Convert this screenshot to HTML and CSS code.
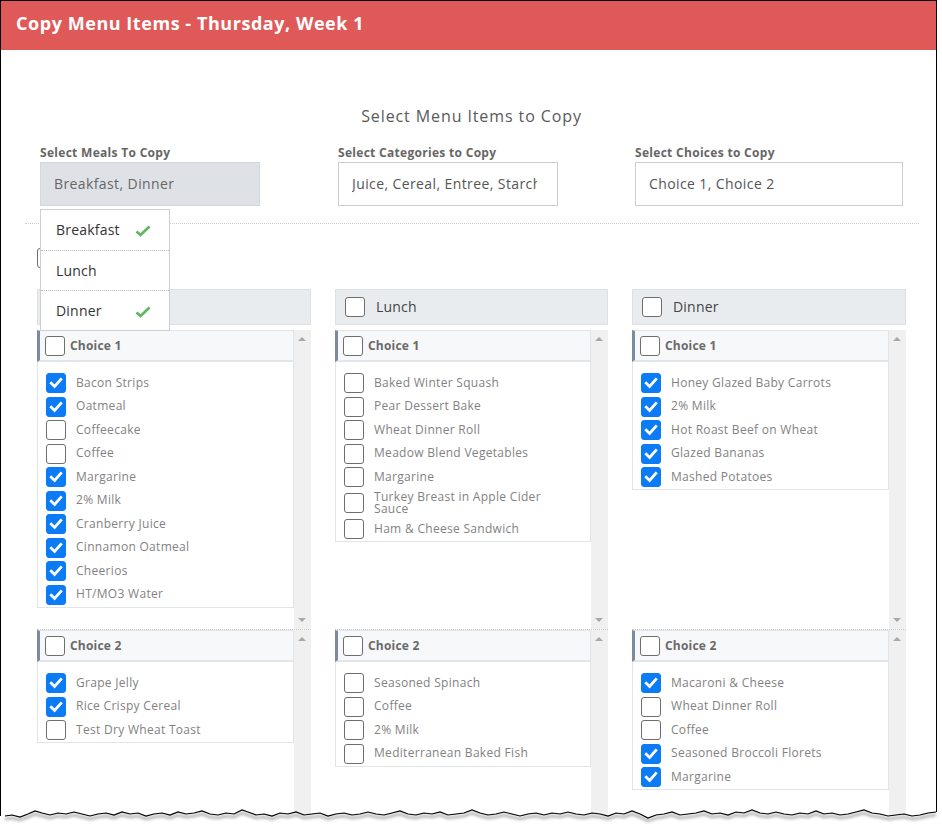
FILE: index.html
```html
<!DOCTYPE html>
<html lang="en">
<head>
<meta charset="utf-8">
<title>Copy Menu Items</title>
<link rel="stylesheet" href="styles.css">
</head>
<body>
<div class="frame">
  <div class="titlebar">Copy Menu Items - Thursday, Week 1</div>
  <div class="content">
    <h2 class="subtitle">Select Menu Items to Copy</h2>
    <div class="filters">
      <div class="filter">
        <label class="flabel">Select Meals To Copy</label>
        <div class="finput disabled"><span class="fval">Breakfast, Dinner</span></div>
        <ul class="dropdown">
          <li class="dd-item">Breakfast<svg class="dd-check" viewBox="0 0 16 12"><path d="M1.5 6.5 L5.5 10 L14.5 1.5" /></svg></li>
          <li class="dd-item">Lunch</li>
          <li class="dd-item">Dinner<svg class="dd-check" viewBox="0 0 16 12"><path d="M1.5 6.5 L5.5 10 L14.5 1.5" /></svg></li>
        </ul>
      </div>
      <div class="filter">
        <label class="flabel">Select Categories to Copy</label>
        <div class="finput"><span class="fval">Juice, Cereal, Entree, Starch</span></div>
      </div>
      <div class="filter">
        <label class="flabel">Select Choices to Copy</label>
        <div class="finput"><span class="fval">Choice 1, Choice 2</span></div>
      </div>
    </div>
    <hr class="sep">
    <div class="select-all"><span class="cb"></span></div>

    <div class="meals">
      <!-- Breakfast -->
      <section class="meal">
        <div class="meal-head"><span class="cb"></span><span>Breakfast</span></div>
        <div class="pane pane-1">
          <div class="pane-body">
            <div class="choice-head"><span class="cb"></span>Choice 1</div>
            <ul class="items">
              <li class="item"><span class="cb on"><svg viewBox="0 0 14 14"><path d="M2.3 7.3 L5.6 10.4 L11.8 3.4"/></svg></span><span class="iname">Bacon Strips</span></li>
              <li class="item"><span class="cb on"><svg viewBox="0 0 14 14"><path d="M2.3 7.3 L5.6 10.4 L11.8 3.4"/></svg></span><span class="iname">Oatmeal</span></li>
              <li class="item"><span class="cb"></span><span class="iname">Coffeecake</span></li>
              <li class="item"><span class="cb"></span><span class="iname">Coffee</span></li>
              <li class="item"><span class="cb on"><svg viewBox="0 0 14 14"><path d="M2.3 7.3 L5.6 10.4 L11.8 3.4"/></svg></span><span class="iname">Margarine</span></li>
              <li class="item"><span class="cb on"><svg viewBox="0 0 14 14"><path d="M2.3 7.3 L5.6 10.4 L11.8 3.4"/></svg></span><span class="iname">2% Milk</span></li>
              <li class="item"><span class="cb on"><svg viewBox="0 0 14 14"><path d="M2.3 7.3 L5.6 10.4 L11.8 3.4"/></svg></span><span class="iname">Cranberry Juice</span></li>
              <li class="item"><span class="cb on"><svg viewBox="0 0 14 14"><path d="M2.3 7.3 L5.6 10.4 L11.8 3.4"/></svg></span><span class="iname">Cinnamon Oatmeal</span></li>
              <li class="item"><span class="cb on"><svg viewBox="0 0 14 14"><path d="M2.3 7.3 L5.6 10.4 L11.8 3.4"/></svg></span><span class="iname">Cheerios</span></li>
              <li class="item"><span class="cb on"><svg viewBox="0 0 14 14"><path d="M2.3 7.3 L5.6 10.4 L11.8 3.4"/></svg></span><span class="iname">HT/MO3 Water</span></li>
            </ul>
          </div>
          <div class="scroll"><span class="arr up"></span><span class="arr down"></span></div>
        </div>
        <div class="pane pane-2">
          <div class="pane-body">
            <div class="choice-head"><span class="cb"></span>Choice 2</div>
            <ul class="items">
              <li class="item"><span class="cb on"><svg viewBox="0 0 14 14"><path d="M2.3 7.3 L5.6 10.4 L11.8 3.4"/></svg></span><span class="iname">Grape Jelly</span></li>
              <li class="item"><span class="cb on"><svg viewBox="0 0 14 14"><path d="M2.3 7.3 L5.6 10.4 L11.8 3.4"/></svg></span><span class="iname">Rice Crispy Cereal</span></li>
              <li class="item"><span class="cb"></span><span class="iname">Test Dry Wheat Toast</span></li>
            </ul>
          </div>
          <div class="scroll"><span class="arr up"></span></div>
        </div>
      </section>

      <!-- Lunch -->
      <section class="meal">
        <div class="meal-head"><span class="cb"></span><span>Lunch</span></div>
        <div class="pane pane-1">
          <div class="pane-body">
            <div class="choice-head"><span class="cb"></span>Choice 1</div>
            <ul class="items">
              <li class="item"><span class="cb"></span><span class="iname">Baked Winter Squash</span></li>
              <li class="item"><span class="cb"></span><span class="iname">Pear Dessert Bake</span></li>
              <li class="item"><span class="cb"></span><span class="iname">Wheat Dinner Roll</span></li>
              <li class="item"><span class="cb"></span><span class="iname">Meadow Blend Vegetables</span></li>
              <li class="item"><span class="cb"></span><span class="iname">Margarine</span></li>
              <li class="item"><span class="cb"></span><span class="iname">Turkey Breast in Apple Cider Sauce</span></li>
              <li class="item"><span class="cb"></span><span class="iname">Ham &amp; Cheese Sandwich</span></li>
            </ul>
          </div>
          <div class="scroll"><span class="arr up"></span><span class="arr down"></span></div>
        </div>
        <div class="pane pane-2">
          <div class="pane-body">
            <div class="choice-head"><span class="cb"></span>Choice 2</div>
            <ul class="items">
              <li class="item"><span class="cb"></span><span class="iname">Seasoned Spinach</span></li>
              <li class="item"><span class="cb"></span><span class="iname">Coffee</span></li>
              <li class="item"><span class="cb"></span><span class="iname">2% Milk</span></li>
              <li class="item"><span class="cb"></span><span class="iname">Mediterranean Baked Fish</span></li>
            </ul>
          </div>
          <div class="scroll"><span class="arr up"></span></div>
        </div>
      </section>

      <!-- Dinner -->
      <section class="meal">
        <div class="meal-head"><span class="cb"></span><span>Dinner</span></div>
        <div class="pane pane-1">
          <div class="pane-body">
            <div class="choice-head"><span class="cb"></span>Choice 1</div>
            <ul class="items">
              <li class="item"><span class="cb on"><svg viewBox="0 0 14 14"><path d="M2.3 7.3 L5.6 10.4 L11.8 3.4"/></svg></span><span class="iname">Honey Glazed Baby Carrots</span></li>
              <li class="item"><span class="cb on"><svg viewBox="0 0 14 14"><path d="M2.3 7.3 L5.6 10.4 L11.8 3.4"/></svg></span><span class="iname">2% Milk</span></li>
              <li class="item"><span class="cb on"><svg viewBox="0 0 14 14"><path d="M2.3 7.3 L5.6 10.4 L11.8 3.4"/></svg></span><span class="iname">Hot Roast Beef on Wheat</span></li>
              <li class="item"><span class="cb on"><svg viewBox="0 0 14 14"><path d="M2.3 7.3 L5.6 10.4 L11.8 3.4"/></svg></span><span class="iname">Glazed Bananas</span></li>
              <li class="item"><span class="cb on"><svg viewBox="0 0 14 14"><path d="M2.3 7.3 L5.6 10.4 L11.8 3.4"/></svg></span><span class="iname">Mashed Potatoes</span></li>
            </ul>
          </div>
          <div class="scroll"><span class="arr up"></span><span class="arr down"></span></div>
        </div>
        <div class="pane pane-2">
          <div class="pane-body">
            <div class="choice-head"><span class="cb"></span>Choice 2</div>
            <ul class="items">
              <li class="item"><span class="cb on"><svg viewBox="0 0 14 14"><path d="M2.3 7.3 L5.6 10.4 L11.8 3.4"/></svg></span><span class="iname">Macaroni &amp; Cheese</span></li>
              <li class="item"><span class="cb"></span><span class="iname">Wheat Dinner Roll</span></li>
              <li class="item"><span class="cb"></span><span class="iname">Coffee</span></li>
              <li class="item"><span class="cb on"><svg viewBox="0 0 14 14"><path d="M2.3 7.3 L5.6 10.4 L11.8 3.4"/></svg></span><span class="iname">Seasoned Broccoli Florets</span></li>
              <li class="item"><span class="cb on"><svg viewBox="0 0 14 14"><path d="M2.3 7.3 L5.6 10.4 L11.8 3.4"/></svg></span><span class="iname">Margarine</span></li>
            </ul>
          </div>
          <div class="scroll"><span class="arr up"></span></div>
        </div>
      </section>
    </div>
  </div>
</div>

<svg class="torn" viewBox="0 0 942 41" width="942" height="41">
  <defs>
    <filter id="blur" x="-5%" y="-50%" width="110%" height="200%"><feGaussianBlur stdDeviation="1.6"/></filter>
  </defs>
  <path class="torn-shadow" d="M5 29 L12 28 L20 30 L28 27 L35 24 L42 26 L50 28 L58 26 L66 27 L74 25 L82 27 L90 29 L98 27 L106 26 L114 28 L122 25 L130 27 L138 26 L146 29 L154 27 L162 26 L170 28 L178 25 L186 27 L194 26 L202 24 L210 27 L218 28 L226 26 L234 27 L242 23 L248 25 L256 28 L264 27 L272 29 L280 26 L288 27 L296 25 L304 28 L312 27 L320 26 L328 29 L336 27 L344 26 L352 28 L360 27 L368 25 L376 27 L384 28 L392 26 L400 24 L408 27 L416 28 L424 26 L432 27 L440 25 L448 28 L456 27 L464 26 L472 23 L480 26 L488 28 L496 27 L504 25 L512 27 L520 29 L528 27 L536 26 L544 28 L552 26 L560 27 L568 25 L576 27 L584 28 L592 26 L600 27 L608 29 L616 26 L624 27 L632 24 L640 27 L648 31 L656 28 L664 27 L672 25 L680 28 L688 27 L696 26 L704 24 L712 27 L720 26 L728 28 L736 25 L744 26 L752 23 L760 26 L768 27 L776 25 L784 27 L792 28 L800 26 L808 27 L816 24 L824 27 L832 26 L840 28 L848 27 L856 25 L864 23 L872 26 L880 27 L888 29 L896 28 L904 27 L912 29 L920 28 L928 26 L936 25"/>
  <path class="torn-line" d="M5 26 L12 25 L20 27 L28 24 L35 21 L42 23 L50 25 L58 23 L66 24 L74 22 L82 24 L90 26 L98 24 L106 23 L114 25 L122 22 L130 24 L138 23 L146 26 L154 24 L162 23 L170 25 L178 22 L186 24 L194 23 L202 21 L210 24 L218 25 L226 23 L234 24 L242 20 L248 22 L256 25 L264 24 L272 26 L280 23 L288 24 L296 22 L304 25 L312 24 L320 23 L328 26 L336 24 L344 23 L352 25 L360 24 L368 22 L376 24 L384 25 L392 23 L400 21 L408 24 L416 25 L424 23 L432 24 L440 22 L448 25 L456 24 L464 23 L472 20 L480 23 L488 25 L496 24 L504 22 L512 24 L520 26 L528 24 L536 23 L544 25 L552 23 L560 24 L568 22 L576 24 L584 25 L592 23 L600 24 L608 26 L616 23 L624 24 L632 21 L640 24 L648 28 L656 25 L664 24 L672 22 L680 25 L688 24 L696 23 L704 21 L712 24 L720 23 L728 25 L736 22 L744 23 L752 20 L760 23 L768 24 L776 22 L784 24 L792 25 L800 23 L808 24 L816 21 L824 24 L832 23 L840 25 L848 24 L856 22 L864 20 L872 23 L880 24 L888 26 L896 25 L904 24 L912 26 L920 25 L928 23 L936 22"/>
</svg>
</body>
</html>
```

FILE: styles.css
```css
* { box-sizing: border-box; }

html, body {
  margin: 0;
  padding: 0;
}

body {
  width: 942px;
  height: 831px;
  overflow: hidden;
  position: relative;
  background: #fff;
  font-family: "Open Sans", "Liberation Sans", sans-serif;
  color: #555;
}

/* the screenshot frame, torn off along the bottom */
.frame {
  width: 937px;
  height: 831px;
  border: 1px solid #000;
  border-bottom: none;
  overflow: hidden;
  clip-path: path("M0 0 L0 816 L5 816 L12 815 L20 817 L28 814 L35 811 L42 813 L50 815 L58 813 L66 814 L74 812 L82 814 L90 816 L98 814 L106 813 L114 815 L122 812 L130 814 L138 813 L146 816 L154 814 L162 813 L170 815 L178 812 L186 814 L194 813 L202 811 L210 814 L218 815 L226 813 L234 814 L242 810 L248 812 L256 815 L264 814 L272 816 L280 813 L288 814 L296 812 L304 815 L312 814 L320 813 L328 816 L336 814 L344 813 L352 815 L360 814 L368 812 L376 814 L384 815 L392 813 L400 811 L408 814 L416 815 L424 813 L432 814 L440 812 L448 815 L456 814 L464 813 L472 810 L480 813 L488 815 L496 814 L504 812 L512 814 L520 816 L528 814 L536 813 L544 815 L552 813 L560 814 L568 812 L576 814 L584 815 L592 813 L600 814 L608 816 L616 813 L624 814 L632 811 L640 814 L648 818 L656 815 L664 814 L672 812 L680 815 L688 814 L696 813 L704 811 L712 814 L720 813 L728 815 L736 812 L744 813 L752 810 L760 813 L768 814 L776 812 L784 814 L792 815 L800 813 L808 814 L816 811 L824 814 L832 813 L840 815 L848 814 L856 812 L864 810 L872 813 L880 814 L888 816 L896 815 L904 814 L912 816 L920 815 L928 813 L936 812 L937 812 L937 0 Z");
}

.titlebar {
  height: 49px;
  background: #e05959;
  color: #fff;
  font-weight: 700;
  font-size: 18px;
  line-height: 44px;
  padding-left: 15px;
  letter-spacing: 0.55px;
}

.content {
  position: relative;
}

.subtitle {
  margin: 56px 0 0;
  padding-left: 6px;
  text-align: center;
  font-weight: 400;
  font-size: 16px;
  line-height: 20px;
  color: #5a5a5a;
  letter-spacing: 0.9px;
}

.filters {
  display: grid;
  grid-template-columns: 298px 297px 268px;
  margin: 19px 0 0 39px;
}

.filter {
  position: relative;
}

.flabel {
  display: block;
  height: 17px;
  font-size: 12px;
  font-weight: 700;
  line-height: 16px;
  color: #666;
  letter-spacing: 0.3px;
}

.finput {
  width: 220px;
  height: 44px;
  border: 1px solid #cdcdcd;
  background: #fff;
  padding: 0 20px 0 13px;
  font-size: 14px;
  line-height: 42px;
  color: #555;
  letter-spacing: 0.4px;
}

.filter:last-child .finput {
  width: 268px;
}

.finput.disabled {
  background: #dee2e6;
  border-color: #d4d8dc;
  color: #666;
}

.fval {
  display: block;
  overflow: hidden;
  white-space: nowrap;
}

.dropdown {
  position: absolute;
  top: 64px;
  left: 0;
  width: 130px;
  margin: 0;
  padding: 0;
  list-style: none;
  background: #fff;
  border: 1px solid #cfcfcf;
  z-index: 5;
}

.dd-item {
  position: relative;
  height: 40px;
  display: flex;
  align-items: center;
  padding-left: 15px;
  padding-bottom: 1px;
  font-size: 14px;
  color: #333;
  border-top: 1px dotted #bdbdbd;
  letter-spacing: 0.2px;
}

.dd-item:first-child {
  border-top: none;
}

.dd-check {
  position: absolute;
  left: 94px;
  top: 15px;
  width: 16px;
  height: 12px;
  fill: none;
  stroke: #5cb85c;
  stroke-width: 2.6;
}

.sep {
  margin: 17px 17px 0 24px;
  height: 0;
  border: 0;
  border-top: 1px dotted #cfcfcf;
}

.select-all {
  margin: 24px 0 0 36px;
  height: 20px;
}

.cb {
  display: inline-flex;
  align-items: center;
  justify-content: center;
  flex: none;
  width: 20px;
  height: 20px;
  border: 1px solid #6e6e6e;
  border-radius: 3px;
  background: #fff;
}

.cb.on {
  background: #0b7bf6;
  border-color: #0b7bf6;
}

.cb svg {
  width: 14px;
  height: 14px;
  fill: none;
  stroke: #fff;
  stroke-width: 2.8;
  stroke-linecap: square;
}

.meals {
  display: grid;
  grid-template-columns: 274px 273px 274px;
  column-gap: 24px;
  margin: 21px 0 0 36px;
}

.meal-head {
  height: 36px;
  display: flex;
  align-items: center;
  gap: 11px;
  padding-left: 9px;
  padding-bottom: 1px;
  background: #e9ecef;
  border: 1px solid #dde1e5;
  font-size: 14px;
  color: #444;
  letter-spacing: 0.2px;
}

.pane {
  display: flex;
}

.pane-1 {
  margin-top: 5px;
  height: 299px;
}

.pane-2 {
  height: 260px;
  border-top: 1px dotted #c6c6c6;
}

.pane-body {
  flex: 1;
  min-width: 0;
}

.scroll {
  position: relative;
  width: 17px;
  background: #f0f0f0;
}

.arr {
  position: absolute;
  left: 4px;
  width: 0;
  height: 0;
  border-left: 4px solid transparent;
  border-right: 4px solid transparent;
}

.arr.up {
  top: 7px;
  border-bottom: 4px solid #a8a8a8;
}

.arr.down {
  bottom: 7px;
  border-top: 4px solid #a8a8a8;
}

.choice-head {
  height: 32px;
  display: flex;
  align-items: center;
  gap: 5px;
  padding-left: 5px;
  background: #f7f8fa;
  border-top: 1px solid #e1e4e8;
  border-right: 1px solid #e1e4e8;
  border-left: 3px solid #7d8ba0;
  border-bottom: 2px solid #e2e5e9;
  font-size: 12px;
  font-weight: 700;
  color: #6a6a6a;
  letter-spacing: 0.2px;
}

.items {
  list-style: none;
  margin: 0;
  padding: 11px 0 2px 8px;
  display: flex;
  flex-direction: column;
  gap: 3.5px;
  background: #fff;
  border: 1px solid #e1e4e8;
  border-top: none;
}

.item {
  display: flex;
  align-items: center;
  gap: 10px;
  min-height: 20px;
  font-size: 12px;
  line-height: 12.5px;
  color: #828282;
  letter-spacing: 0.3px;
}

.iname {
  max-width: 176px;
}

.torn {
  position: absolute;
  left: 0;
  top: 790px;
  z-index: 10;
}

.torn-shadow {
  fill: none;
  stroke: #9a9a9a;
  stroke-width: 2;
  filter: url(#blur);
}

.torn-line {
  fill: none;
  stroke: #000;
  stroke-width: 1.2;
}
```
